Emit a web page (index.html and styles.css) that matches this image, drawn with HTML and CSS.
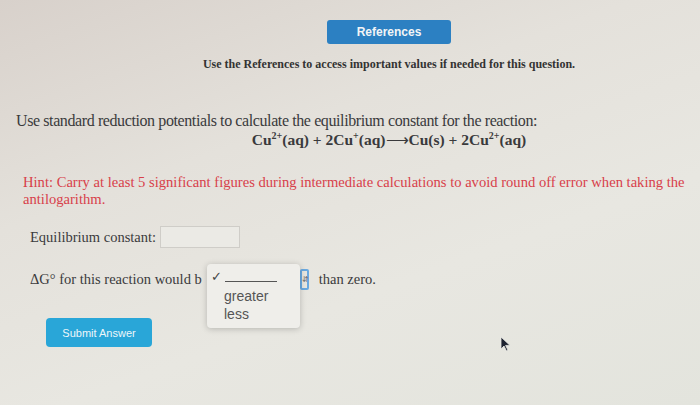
FILE: index.html
```html
<!DOCTYPE html>
<html lang="en">
<head>
    <meta charset="UTF-8">
    <title>Equilibrium Constant Question</title>
    <link rel="stylesheet" href="styles.css">
</head>
<body>
    <section class="top">
        <button class="ref-btn">References</button>
        <p class="note">Use the References to access important values if needed for this question.</p>
    </section>

    <section class="question">
        <p class="prompt">Use standard reduction potentials to calculate the equilibrium constant for the reaction:</p>
        <p class="equation">Cu<sup>2+</sup>(aq) + 2Cu<sup>+</sup>(aq)<span class="arrow">&#x27F6;</span>Cu(s) + 2Cu<sup>2+</sup>(aq)</p>

        <p class="hint">Hint: Carry at least 5 significant figures during intermediate calculations to avoid round off error when taking the antilogarithm.</p>

        <div class="field">
            <span>Equilibrium constant:</span>
            <input type="text" class="answer">
        </div>

        <div class="field sign">
            <span>&Delta;G&deg; for this reaction would b</span>
            <span class="select"><span class="select-arrows">&#8693;</span></span>
            <span>than zero.</span>
            <div class="menu">
                <div class="opt checked"><span class="tick">&#10003;</span><span class="blank"></span></div>
                <div class="opt">greater</div>
                <div class="opt">less</div>
            </div>
        </div>

        <button class="submit">Submit Answer</button>
    </section>

    <svg class="cursor" width="12" height="16" viewBox="0 0 12 16">
        <path d="M1 1 L1 13 L4 10 L6.5 15 L8 14.3 L5.6 9.4 L10 9.4 Z" fill="#1d2230" stroke="#e8e8e4" stroke-width="0.8"/>
    </svg>
</body>
</html>
```

FILE: styles.css
```css
body {
    margin: 0;
    width: 700px;
    height: 405px;
    overflow: hidden;
    position: relative;
    font-family: "Liberation Serif", "Times New Roman", serif;
    color: #3a3a3c;
    background: linear-gradient(160deg, #d8d1cb 0%, #e4e1db 35%, #e8e7e1 65%, #e3e4dd 100%);
}

.top {
    padding: 20px 0 0 78px;
    text-align: center;
}

.ref-btn {
    width: 124px;
    height: 24px;
    border: none;
    border-radius: 3px;
    background-color: #2c80c2;
    color: #f2f4f6;
    font-family: "Liberation Sans", Arial, sans-serif;
    font-weight: bold;
    font-size: 12px;
    padding: 0;
}

.note {
    margin: 13px 0 0;
    font-size: 12px;
    font-weight: bold;
    color: #333;
}

.question {
    padding: 40px 0 0 16px;
    position: relative;
}

.prompt {
    margin: 0;
    font-size: 16px;
    letter-spacing: -0.4px;
    line-height: 18px;
}

.equation {
    margin: 1px 0 0 62px;
    text-align: center;
    font-size: 15.5px;
    font-weight: bold;
    line-height: 18px;
}

.equation sup {
    font-size: 10px;
    vertical-align: 6px;
    line-height: 0;
}

.arrow {
    font-weight: normal;
}

.hint {
    margin: 25px 0 0 7px;
    font-size: 14.6px;
    line-height: 17px;
    color: #d8404a;
    width: 680px;
}

.field {
    display: flex;
    align-items: center;
    gap: 4px;
    margin: 18px 0 0 14px;
    font-size: 14.5px;
}

.answer {
    width: 78px;
    height: 20px;
    box-sizing: content-box;
    padding: 0;
    border: 1px solid #cfcdc8;
    background: #ebeae5;
}

.sign {
    position: relative;
    margin-top: 23px;
}

.select {
    width: 103px;
    height: 16px;
    margin-right: 6px;
    position: relative;
}

.select-arrows {
    position: absolute;
    right: 0;
    top: -3px;
    width: 5px;
    height: 17px;
    border: 2px solid #6aa9e0;
    border-radius: 2px;
    font-size: 8px;
    line-height: 17px;
    text-align: center;
    color: #777;
    font-family: "Liberation Sans", sans-serif;
}

.menu {
    position: absolute;
    left: 177px;
    top: -7px;
    width: 93px;
    padding: 4px 0 4px;
    background: #efeeea;
    border-radius: 4px;
    box-shadow: 0 1px 6px rgba(0, 0, 0, 0.22);
    font-family: "Liberation Sans", Arial, sans-serif;
    font-size: 14px;
    color: #555;
}

.opt {
    height: 18.5px;
    line-height: 18.5px;
    padding-left: 17px;
}

.opt.checked {
    display: flex;
    align-items: center;
    padding-left: 0;
}

.tick {
    width: 18px;
    text-align: center;
    font-size: 13px;
    color: #444;
}

.blank {
    width: 52px;
    border-bottom: 1px solid #555;
    margin-top: 8px;
}

.submit {
    display: block;
    margin: 30px 0 0 30px;
    width: 106px;
    height: 29px;
    border: none;
    border-radius: 4px;
    background-color: #29a6d8;
    color: #eef6fa;
    font-family: "Liberation Sans", Arial, sans-serif;
    font-size: 11px;
    padding: 0;
}

.cursor {
    position: absolute;
    left: 500px;
    top: 336px;
}
```
